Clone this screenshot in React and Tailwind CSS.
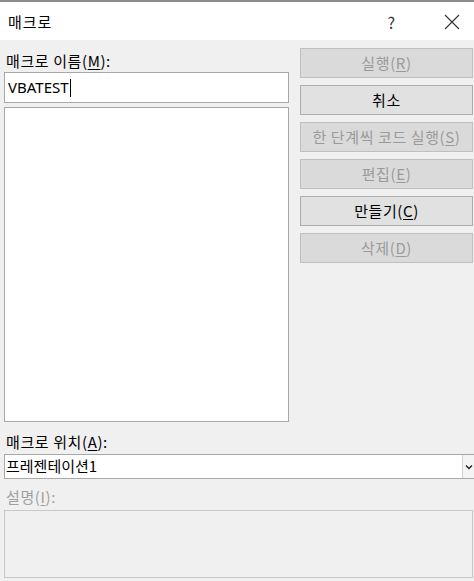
const font = { fontFamily: '"Noto Sans CJK KR", "Noto Sans", sans-serif' };

function Mn({ children }) {
  return <span className="underline underline-offset-2">{children}</span>;
}

function Btn({ children, disabled }) {
  return (
    <div
      className={
        "h-[30px] flex items-center justify-center border text-[15px] tracking-[0.6px] " +
        (disabled
          ? "bg-[#cccccc]/60 border-[#bfbfbf] text-[#9a9a9a]"
          : "bg-[#e1e1e1] border-[#adadad] text-black")
      }
    >
      {children}
    </div>
  );
}

export default function App() {
  return (
    <div className="w-[474px] h-[581px] bg-[#f0f0f0] overflow-hidden text-[#000]" style={font}>
      {/* title bar */}
      <div className="h-[40px] bg-white border-t-2 border-[#8c8c8c] flex items-center pl-[8px] pr-[14px]">
        <span className="text-[15px] tracking-[1px] flex-1 pt-[2px]">매크로</span>
        <span className="text-[16px] text-[#333] mr-[49px] pt-[2px]">?</span>
        <svg width="16" height="16" viewBox="0 0 16 16" className="mt-[2px]">
          <path d="M1 1 L15 15 M15 1 L1 15" stroke="#333" strokeWidth="1.1" fill="none" />
        </svg>
      </div>

      <div className="pl-[4px]">
        <div className="flex gap-[11px]">
          <div className="w-[285px] pt-[10px]">
            <div className="h-[21px] leading-[21px] text-[15px] tracking-[0.6px] pl-[2px]">
              매크로 이름(<Mn>M</Mn>):
            </div>
            <div className="mt-[1px] h-[31px] bg-white border border-[#a8a8a8] flex items-center pl-[3px] text-[15px]" style={{ fontFamily: '"Noto Sans", sans-serif' }}>
              VBATEST
              <span className="inline-block w-[1px] h-[18px] bg-black ml-[1px]" />
            </div>
            <div className="mt-[4px] h-[315px] bg-white border border-[#a8a8a8]" />
          </div>
          <div className="w-[173px] pt-[8px] flex flex-col gap-[7px]">
            <Btn disabled>실행(<Mn>R</Mn>)</Btn>
            <Btn>취소</Btn>
            <Btn disabled>한 단계씩 코드 실행(<Mn>S</Mn>)</Btn>
            <Btn disabled>편집(<Mn>E</Mn>)</Btn>
            <Btn>만들기(<Mn>C</Mn>)</Btn>
            <Btn disabled>삭제(<Mn>D</Mn>)</Btn>
          </div>
        </div>

        <div className="mt-[10px] h-[20px] leading-[20px] text-[15px] tracking-[0.6px] pl-[2px]">
          매크로 위치(<Mn>A</Mn>):
        </div>
        <div className="mt-[2px] h-[25px] bg-white border border-[#a8a8a8] border-r-0 flex items-stretch">
          <div className="flex-1 flex items-center pl-[1px] text-[15px]">프레젠테이션1</div>
          <div className="w-[12px] border-l border-[#d0d0d0] bg-[#f4f4f4] flex items-center justify-center">
            <svg width="8" height="6" viewBox="0 0 8 6">
              <path d="M1 1.5 L4 4.5 L7 1.5" stroke="#222" strokeWidth="1.4" fill="none" />
            </svg>
          </div>
        </div>
        <div className="mt-[7px] h-[22px] leading-[22px] text-[15px] tracking-[0.6px] pl-[2px] text-[#a0a0a0]">
          설명(<Mn>I</Mn>):
        </div>
        <div className="mt-[2px] h-[68px] w-[469px] bg-[#f0f0f0] border border-[#c8c8c8]" />
      </div>
    </div>
  );
}
